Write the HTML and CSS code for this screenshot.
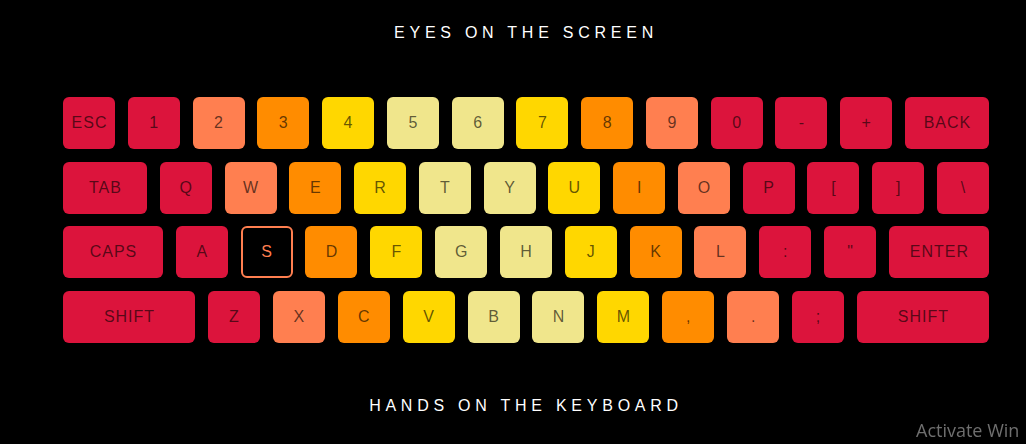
FILE: index.html
```html
<!DOCTYPE html>
<html lang="en">
<head>
<meta charset="utf-8">
<title>Keyboard</title>
<link rel="stylesheet" href="styles.css">
</head>
<body>
<div class="page">
  <h1 class="title">EYES ON THE SCREEN</h1>
  <div class="keyboard">
    <div class="row">
      <div class="key crimson">ESC</div>
      <div class="key crimson">1</div>
      <div class="key coral">2</div>
      <div class="key orange">3</div>
      <div class="key gold">4</div>
      <div class="key khaki">5</div>
      <div class="key khaki">6</div>
      <div class="key gold">7</div>
      <div class="key orange">8</div>
      <div class="key coral">9</div>
      <div class="key crimson">0</div>
      <div class="key crimson">-</div>
      <div class="key crimson">+</div>
      <div class="key crimson w84">BACK</div>
    </div>
    <div class="row">
      <div class="key crimson w84">TAB</div>
      <div class="key crimson">Q</div>
      <div class="key coral">W</div>
      <div class="key orange">E</div>
      <div class="key gold">R</div>
      <div class="key khaki">T</div>
      <div class="key khaki">Y</div>
      <div class="key gold">U</div>
      <div class="key orange">I</div>
      <div class="key coral">O</div>
      <div class="key crimson">P</div>
      <div class="key crimson">[</div>
      <div class="key crimson">]</div>
      <div class="key crimson">\</div>
    </div>
    <div class="row">
      <div class="key crimson w100">CAPS</div>
      <div class="key crimson">A</div>
      <div class="key active">S</div>
      <div class="key orange">D</div>
      <div class="key gold">F</div>
      <div class="key khaki">G</div>
      <div class="key khaki">H</div>
      <div class="key gold">J</div>
      <div class="key orange">K</div>
      <div class="key coral">L</div>
      <div class="key crimson">:</div>
      <div class="key crimson">"</div>
      <div class="key crimson w100">ENTER</div>
    </div>
    <div class="row">
      <div class="key crimson w132">SHIFT</div>
      <div class="key crimson">Z</div>
      <div class="key coral">X</div>
      <div class="key orange">C</div>
      <div class="key gold">V</div>
      <div class="key khaki">B</div>
      <div class="key khaki">N</div>
      <div class="key gold">M</div>
      <div class="key orange">,</div>
      <div class="key coral">.</div>
      <div class="key crimson">;</div>
      <div class="key crimson w132">SHIFT</div>
    </div>
  </div>
  <h2 class="title bottom">HANDS ON THE KEYBOARD</h2>
</div>
<div class="watermark">Activate Win</div>
</body>
</html>
```

FILE: styles.css
```css
html, body {
  margin: 0;
  padding: 0;
  background: #000;
  overflow: hidden;
  height: 100%;
}

body {
  font-family: "Liberation Sans", Arial, sans-serif;
}

.page {
  width: 926px;
  margin-left: 63px;
  display: flex;
  flex-direction: column;
}

.title {
  margin: 24px 0 0 0;
  font-size: 16px;
  font-weight: normal;
  line-height: 18px;
  letter-spacing: 4.75px;
  color: #fff;
  text-align: center;
}

.title.bottom {
  margin-top: 54px;
}

.keyboard {
  margin-top: 55px;
  display: flex;
  flex-direction: column;
  gap: 12.7px;
}

.row {
  display: flex;
  justify-content: space-between;
}

.key {
  width: 52px;
  height: 52px;
  box-sizing: border-box;
  border-radius: 6px;
  display: flex;
  align-items: center;
  justify-content: center;
  font-size: 16px;
  letter-spacing: 1px;
  padding-left: 1px;
  color: rgba(0, 0, 0, 0.62);
}

.w84 { width: 84px; }
.w100 { width: 100px; }
.w132 { width: 132px; }

.crimson { background: #dc143c; }
.coral { background: #ff7f50; }
.orange { background: #ff8c00; }
.gold { background: #ffd700; }
.khaki { background: #f0e68c; }

.active {
  background: #000;
  border: 2px solid #ff7f50;
  color: #ff7f50;
}

.watermark {
  position: fixed;
  left: 916px;
  top: 418px;
  font-family: "Open Sans", "Noto Sans", sans-serif;
  font-size: 18px;
  color: #6f6f6f;
  white-space: nowrap;
}
```
